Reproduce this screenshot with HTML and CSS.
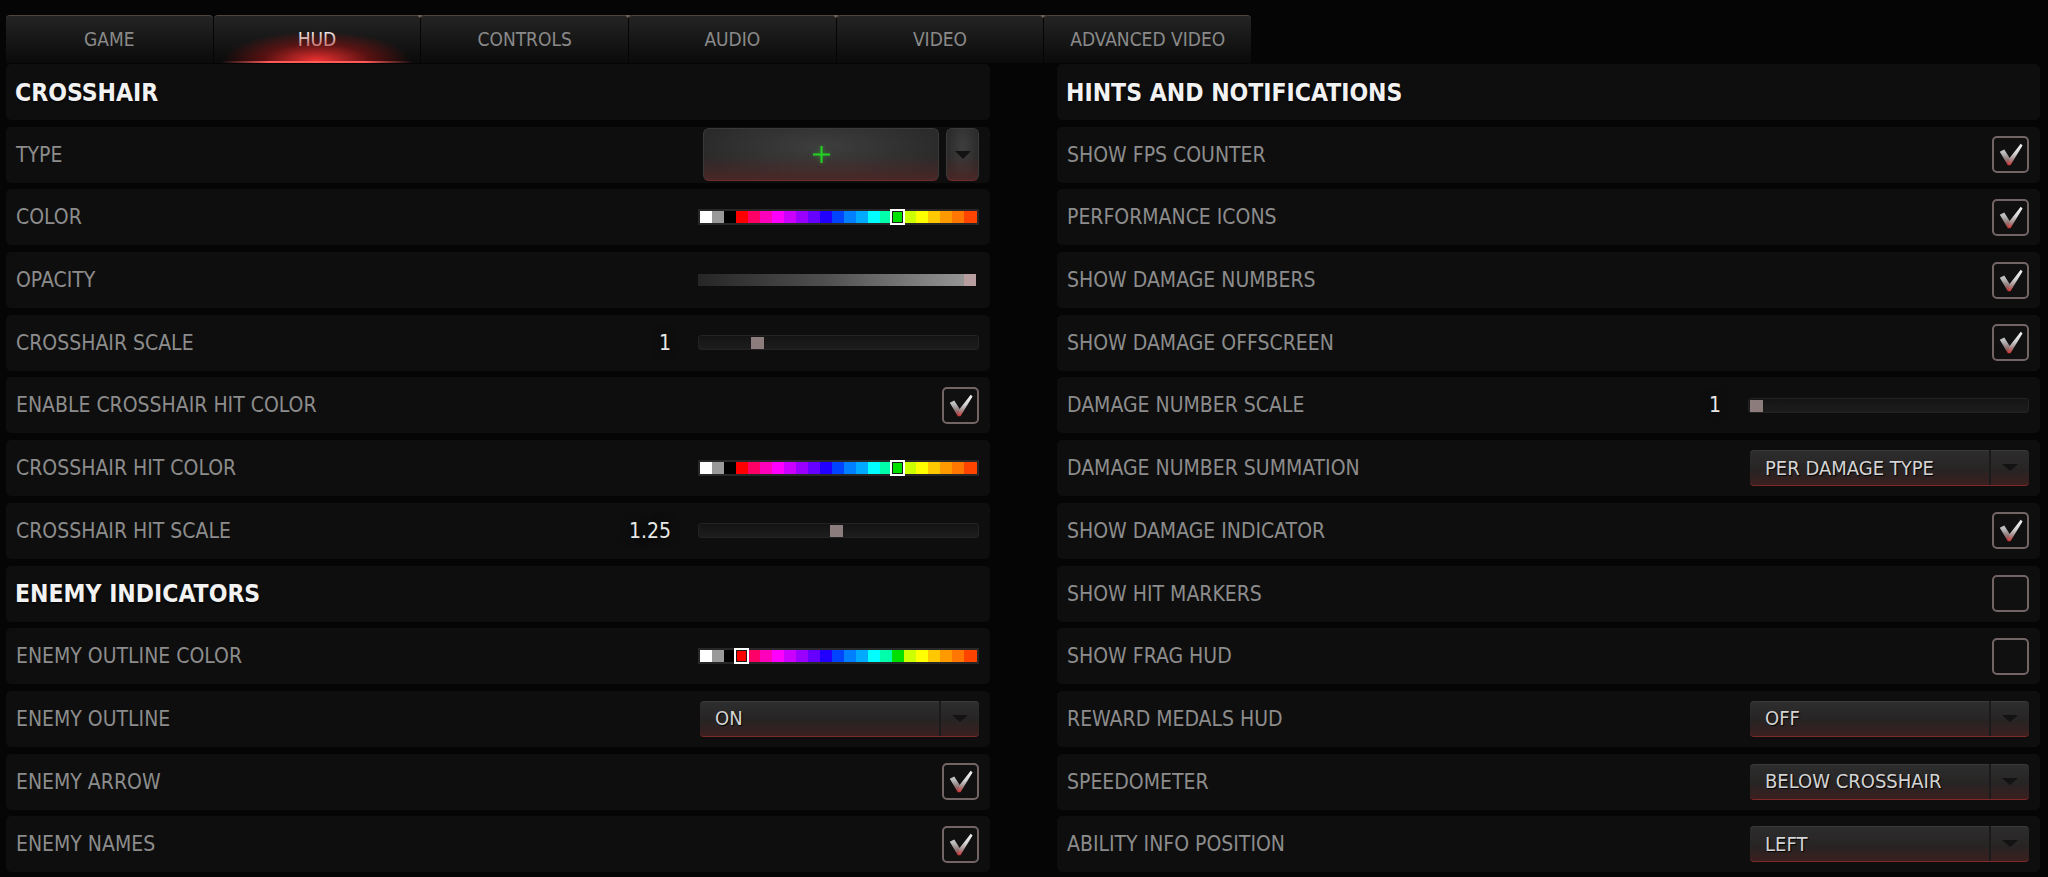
FILE: index.html
```html
<!DOCTYPE html>
<html lang="en">
  <head>
    <meta charset="UTF-8" />
    <title>Settings - HUD</title>
    <link rel="stylesheet" href="styles.css">
  </head>
  <body>
    <!-- shared checkmark -->
    <svg class="defs" width="0" height="0" aria-hidden="true">
      <defs>
        <linearGradient id="tick" x1="0" y1="0" x2="0" y2="1">
          <stop offset="0" stop-color="#fafafa" />
          <stop offset="0.45" stop-color="#d2d2d2" />
          <stop offset="0.72" stop-color="#a38c8c" />
          <stop offset="1" stop-color="#d23434" />
        </linearGradient>
        <symbol id="check" viewBox="0 0 37 37">
          <path d="M6.5 15.5 L11.5 13 L17.5 22.5 L30 6.5 L32 8.5 L18.5 30.5 L15.5 30.5 Z" fill="url(#tick)" />
          <path d="M6.5 15.5 L11.5 13 L17.5 22.5 L15.5 30.5 Z" fill="#000" opacity="0.12" />
        </symbol>
      </defs>
    </svg>

    <nav class="tabs">
      <div class="tab">GAME</div>
      <div class="tab active">HUD</div>
      <div class="tab">CONTROLS</div>
      <div class="tab">AUDIO</div>
      <div class="tab">VIDEO</div>
      <div class="tab">ADVANCED VIDEO</div>
    </nav>

    <main class="columns">
      <section class="panel">
        <div class="row head">CROSSHAIR</div>
        <div class="row">TYPE
          <div class="ctl picker">
            <div class="face">
              <svg width="17" height="17" viewBox="0 0 17 17"><path d="M8.5 0 V17 M0 8.5 H17" stroke="#22d422" stroke-width="2" /></svg>
            </div>
            <div class="face arrow"><span class="tri"></span></div>
          </div>
        </div>
        <div class="row">COLOR
          <div class="ctl swatches"><span class="pick" style="left:190px;background:#00e000"></span></div>
        </div>
        <div class="row">OPACITY
          <div class="ctl fade"><span class="knob"></span></div>
        </div>
        <div class="row">CROSSHAIR SCALE
          <div class="ctl slider"><span class="num">1</span><div class="track"><span class="knob" style="left:52px"></span></div></div>
        </div>
        <div class="row">ENABLE CROSSHAIR HIT COLOR
          <div class="ctl check"><svg><use href="#check" /></svg></div>
        </div>
        <div class="row">CROSSHAIR HIT COLOR
          <div class="ctl swatches"><span class="pick" style="left:190px;background:#00e000"></span></div>
        </div>
        <div class="row">CROSSHAIR HIT SCALE
          <div class="ctl slider"><span class="num">1.25</span><div class="track"><span class="knob" style="left:131px"></span></div></div>
        </div>
        <div class="row head">ENEMY INDICATORS</div>
        <div class="row">ENEMY OUTLINE COLOR
          <div class="ctl swatches"><span class="pick" style="left:34px;background:#ff0000"></span></div>
        </div>
        <div class="row">ENEMY OUTLINE
          <div class="ctl select"><span class="val">ON</span><span class="arr"><span class="tri"></span></span></div>
        </div>
        <div class="row">ENEMY ARROW
          <div class="ctl check"><svg><use href="#check" /></svg></div>
        </div>
        <div class="row">ENEMY NAMES
          <div class="ctl check"><svg><use href="#check" /></svg></div>
        </div>
      </section>

      <section class="panel">
        <div class="row head">HINTS AND NOTIFICATIONS</div>
        <div class="row">SHOW FPS COUNTER
          <div class="ctl check"><svg><use href="#check" /></svg></div>
        </div>
        <div class="row">PERFORMANCE ICONS
          <div class="ctl check"><svg><use href="#check" /></svg></div>
        </div>
        <div class="row">SHOW DAMAGE NUMBERS
          <div class="ctl check"><svg><use href="#check" /></svg></div>
        </div>
        <div class="row">SHOW DAMAGE OFFSCREEN
          <div class="ctl check"><svg><use href="#check" /></svg></div>
        </div>
        <div class="row">DAMAGE NUMBER SCALE
          <div class="ctl slider"><span class="num">1</span><div class="track"><span class="knob" style="left:1px"></span></div></div>
        </div>
        <div class="row">DAMAGE NUMBER SUMMATION
          <div class="ctl select"><span class="val">PER DAMAGE TYPE</span><span class="arr"><span class="tri"></span></span></div>
        </div>
        <div class="row">SHOW DAMAGE INDICATOR
          <div class="ctl check"><svg><use href="#check" /></svg></div>
        </div>
        <div class="row">SHOW HIT MARKERS
          <div class="ctl check"></div>
        </div>
        <div class="row">SHOW FRAG HUD
          <div class="ctl check"></div>
        </div>
        <div class="row">REWARD MEDALS HUD
          <div class="ctl select"><span class="val">OFF</span><span class="arr"><span class="tri"></span></span></div>
        </div>
        <div class="row">SPEEDOMETER
          <div class="ctl select"><span class="val">BELOW CROSSHAIR</span><span class="arr"><span class="tri"></span></span></div>
        </div>
        <div class="row">ABILITY INFO POSITION
          <div class="ctl select"><span class="val">LEFT</span><span class="arr"><span class="tri"></span></span></div>
        </div>
      </section>
    </main>
  </body>
</html>
```

FILE: styles.css
```css
* {
  box-sizing: border-box;
}
html,
body {
  margin: 0;
  height: 100%;
}
body {
  background: #050505;
  font-family: "DejaVu Sans Condensed", "DejaVu Sans", sans-serif;
  font-stretch: condensed;
  color: #8c8c8c;
  overflow: hidden;
}
.defs {
  position: absolute;
}

/* tabs */
.tabs {
  display: grid;
  grid-template-columns: repeat(6, 1fr);
  width: 1246px;
  height: 48px;
  margin: 15px 0 0 6px;
}
.tab {
  position: relative;
  display: flex;
  align-items: center;
  justify-content: center;
  padding-bottom: 2px;
  font-size: 19px;
  color: #8a8a8a;
  background: linear-gradient(#242424, #171717 50%, #0a0a0a);
  border-top: 1px solid #4c453e;
  border-radius: 4px 4px 0 0;
  margin-right: 1px;
}
.tab + .tab::before {
  content: "";
  position: absolute;
  top: -1px;
  left: -4px;
  border-left: 3px solid transparent;
  border-right: 3px solid transparent;
  border-top: 3px solid #6a6158;
}
.tab.active {
  color: #f0f0f0;
  overflow: hidden;
}
.tab.active::after {
  content: "";
  position: absolute;
  left: 50%;
  bottom: 0;
  width: 190px;
  height: 30px;
  margin-left: -95px;
  background: radial-gradient(ellipse at 50% 100%, rgba(240, 50, 50, 1), rgba(160, 20, 20, 0.5) 40%, transparent 70%);
  border-bottom: 2px solid transparent;
  border-image: linear-gradient(to right, transparent, #ff5a5a 25%, #ff5a5a 75%, transparent) 1;
}

/* columns */
.columns {
  display: grid;
  grid-template-columns: 984px 983px;
  column-gap: 67px;
  margin: 1px 0 0 6px;
}
.panel {
  display: flex;
  flex-direction: column;
  gap: 6.7px;
}
.row {
  display: flex;
  align-items: center;
  height: 56px;
  padding: 0 11px 0 10px;
  background: #0e0e0e;
  border-radius: 5px;
  font-size: 21px;
}
.row.head {
  padding-left: 9px;
  font-size: 24.5px;
  font-weight: bold;
  color: #f2f2f2;
  text-shadow: 0 1px 2px #000;
}
.ctl {
  margin-left: auto;
  display: flex;
  align-items: center;
}

/* crosshair type button */
.picker {
  gap: 7px;
  height: 53px;
}
.face {
  display: flex;
  align-items: center;
  justify-content: center;
  width: 236px;
  height: 53px;
  border: 1px solid #3a3a3a;
  border-bottom-color: #6e2c2c;
  border-radius: 6px;
  background:
    linear-gradient(transparent 50%, rgba(120, 35, 35, 0.4)),
    radial-gradient(ellipse at 50% 35%, #3e3e3e, #2a2a2a 75%);
}
.face svg {
  filter: drop-shadow(0 0 2px rgba(40, 220, 40, 0.5));
}
.face.arrow {
  width: 33px;
}
.tri {
  width: 0;
  height: 0;
  border-left: 8px solid transparent;
  border-right: 8px solid transparent;
  border-top: 8px solid #131313;
}

/* colour strip */
.swatches {
  position: relative;
  width: 281px;
  height: 16px;
  border: 2px solid #272727;
  background: linear-gradient(to right,
    #fff 0 12px, #999 12px 24px, #000 24px 36px, #f00 36px 48px,
    #ff0066 48px 60px, #ff00bb 60px 72px, #f0f 72px 84px, #cc00ff 84px 96px,
    #9900ff 96px 108px, #6600ff 108px 120px, #2200ff 120px 132px, #0044ff 132px 144px,
    #0080ff 144px 156px, #00aaff 156px 168px, #0ff 168px 180px, #00ffaa 180px 192px,
    #00e000 192px 204px, #ccff00 204px 216px, #ff0 216px 228px, #ffc800 228px 240px,
    #ff9900 240px 252px, #ff7700 252px 264px, #ff4400 264px 277px);
}
.pick {
  position: absolute;
  top: -2px;
  width: 15px;
  height: 16px;
  border: 2px solid #fff;
  box-shadow: inset 0 0 0 1px #1a1a1a;
}

/* opacity */
.fade {
  position: relative;
  width: 278px;
  height: 12px;
  margin-right: 3px;
  background: linear-gradient(to right, #262626, #4e4e4e 45%, #9a9a9a);
}
.fade .knob {
  position: absolute;
  right: 0;
  top: 0;
  width: 12px;
  height: 12px;
  background: #b89e9e;
}

/* sliders */
.slider {
  gap: 27px;
}
.num {
  color: #e8e8e8;
  font-size: 21px;
  text-shadow: 0 0 10px #000;
}
.track {
  position: relative;
  width: 281px;
  height: 15px;
  border: 1px solid #232323;
  border-radius: 3px;
  background: linear-gradient(#141414, #1d1d1d);
}
.track .knob {
  position: absolute;
  top: 1px;
  width: 13px;
  height: 12px;
  background: #8c7c7c;
}

/* checkbox */
.check {
  width: 37px;
  height: 37px;
  border: 2px solid #736565;
  border-radius: 5px;
  background: #101010;
}
.check svg {
  display: block;
  width: 100%;
  height: 100%;
}

/* dropdown */
.select {
  width: 279px;
  height: 36px;
  border-radius: 4px;
  border-bottom: 1px solid #7e2a2a;
  background: linear-gradient(#2e2e2e, #272424 55%, #3b1f1f);
  box-shadow: inset 0 1px 0 rgba(255, 255, 255, 0.06);
}
.select .val {
  flex: 1;
  padding-left: 15px;
  font-size: 20px;
  color: #d4d4d4;
  text-shadow: 1px 1px 1px #000;
}
.select .arr {
  display: flex;
  align-items: center;
  justify-content: center;
  width: 40px;
  height: 100%;
  border-left: 2px solid #1b1b1b;
}
.select .tri {
  border-top-width: 7px;
}
```
